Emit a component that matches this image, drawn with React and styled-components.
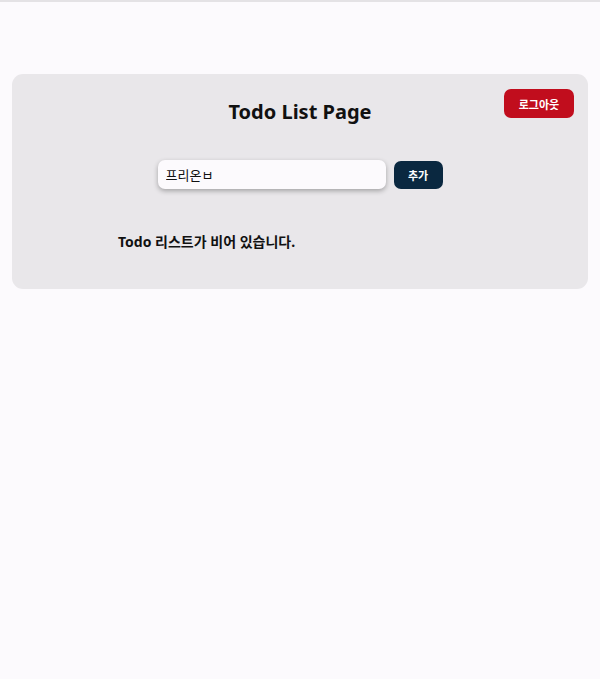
import React, { useState } from "react";
import styled, { createGlobalStyle } from "styled-components";

const Global = createGlobalStyle`
html, body {
  margin: 0;
  background: #fcfafd;
  font-family: "Noto Sans", "Noto Sans CJK KR", sans-serif;
}
body {
  border-top: 2px solid #e4e2e5;
}
`

const Page = styled.div`
padding: 72px 12px 0;
`

const Card = styled.div`
background: #e9e7ea;
border-radius: 11px;
padding: 15px 14px 38px;
`

const Header = styled.div`
display: grid;
grid-template-columns: 1fr auto 1fr;
align-items: start;
`

const Title = styled.h1`
grid-column: 2;
margin: 8px 0 0;
font-size: 20px;
font-weight: 700;
color: #111;
line-height: 30px;
`

const LogoutButton = styled.button`
grid-column: 3;
justify-self: end;
background: #c10d1d;
color: white;
border: none;
border-radius: 7px;
width: 70px;
height: 29px;
font-family: inherit;
font-size: 11px;
font-weight: 700;
cursor: pointer;
`

const Form = styled.form`
display: flex;
justify-content: center;
align-items: center;
gap: 8px;
margin-top: 33px;
`

const Input = styled.input`
width: 228px;
height: 29px;
box-sizing: border-box;
border: none;
border-radius: 7px;
background: #fcfafd;
box-shadow: 0 2px 5px rgba(0, 0, 0, 0.3);
padding: 0 8px;
font-family: inherit;
font-size: 13px;
color: #111;
outline: none;
`

const AddButton = styled.button`
background: #0a2840;
color: white;
border: none;
border-radius: 7px;
width: 49px;
height: 28px;
font-family: inherit;
font-size: 11px;
font-weight: 700;
`

const Empty = styled.p`
margin: 42px 0 0 92px;
font-size: 14px;
font-weight: 700;
color: #111;
`

function App() {
  const [text, setText] = useState("프리온ㅂ");
  const [todos, setTodos] = useState([]);

  const onSubmit = (e) => {
    e.preventDefault();
    if (!text.trim()) return;
    setTodos([...todos, text]);
    setText("");
  };

  return (
    <>
      <Global />
      <Page>
        <Card>
          <Header>
            <Title>Todo List Page</Title>
            <LogoutButton>로그아웃</LogoutButton>
          </Header>
          <Form onSubmit={onSubmit}>
            <Input value={text} onChange={(e) => setText(e.target.value)} />
            <AddButton type="submit">추가</AddButton>
          </Form>
          {todos.length === 0 ? (
            <Empty>Todo 리스트가 비어 있습니다.</Empty>
          ) : (
            todos.map((t, i) => <Empty key={i}>{t}</Empty>)
          )}
        </Card>
      </Page>
    </>
  );
}

export default App;
